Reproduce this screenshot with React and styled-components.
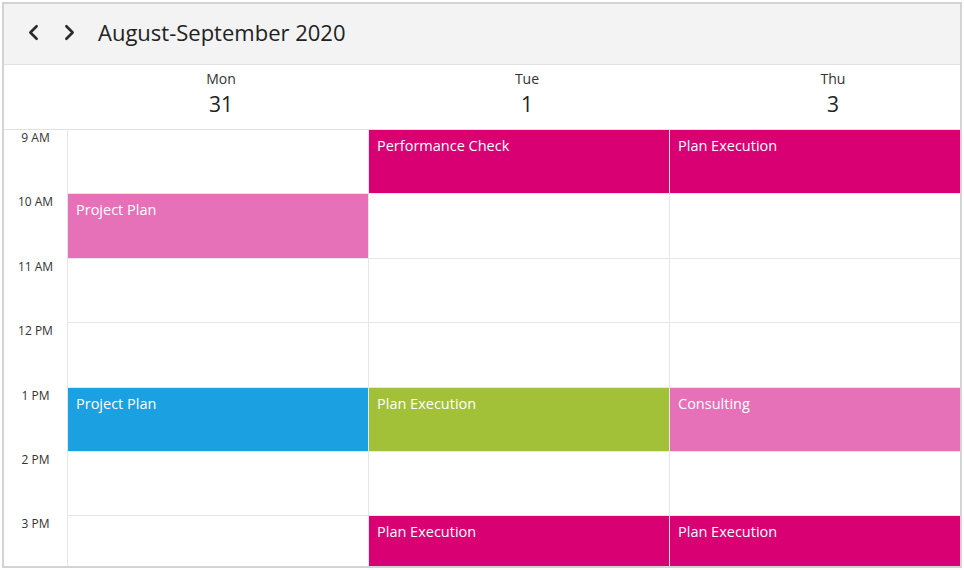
import React from "react";
import styled, { createGlobalStyle } from "styled-components";
import { ChevronLeft, ChevronRight } from "lucide-react";

const GlobalStyle = createGlobalStyle`
  html, body {
    margin: 0;
    padding: 0;
    background: #ffffff;
  }
  body {
    font-family: "Open Sans", "Noto Sans", Arial, sans-serif;
    color: #222222;
  }
`;

const Frame = styled.div`
  margin: 2px;
  width: 960px;
  height: 566px;
  box-sizing: border-box;
  border: 2px solid #d3d3d3;
  overflow: hidden;
  display: flex;
  flex-direction: column;
  background: #ffffff;
`;

const Toolbar = styled.div`
  height: 61px;
  box-sizing: border-box;
  flex: none;
  display: flex;
  align-items: center;
  padding: 0 0 4px 11px;
  background: #f3f3f3;
  border-bottom: 1px solid #e2e2e2;
`;

const NavButton = styled.button`
  width: 36px;
  height: 36px;
  padding: 0;
  border: none;
  background: transparent;
  color: #2b2b2b;
  display: flex;
  align-items: center;
  justify-content: center;
  cursor: pointer;
`;

const Title = styled.h1`
  margin: 0 0 0 11px;
  font-size: 22px;
  font-weight: 400;
  color: #222222;
  letter-spacing: 0;
`;

const DayHeader = styled.div`
  height: 65px;
  box-sizing: border-box;
  flex: none;
  display: grid;
  grid-template-columns: 64px repeat(3, 306px);
  border-bottom: 1px solid #e2e2e2;
`;

const DayCell = styled.div`
  display: flex;
  flex-direction: column;
  align-items: center;
  padding-top: 4px;
`;

const DayName = styled.span`
  font-size: 14px;
  line-height: 20px;
  color: #333333;
`;

const DayNumber = styled.span`
  font-size: 21px;
  line-height: 30px;
  color: #222222;
`;

const Body = styled.div`
  display: grid;
  grid-template-columns: 64px repeat(3, 301px);
  grid-auto-rows: 64.4px;
`;

const TimeLabel = styled.div`
  grid-column: 1;
  border-right: 1px solid #e6e6e6;
  text-align: center;
  font-size: 12px;
  line-height: 16px;
  color: #333333;
  padding-top: 0;
`;

const Slot = styled.div`
  box-sizing: border-box;
  border-right: 1px solid #e6e6e6;
  border-bottom: 1px solid #e6e6e6;
  position: relative;
`;

const Event = styled.div`
  position: absolute;
  inset: 0;
  background: ${(p) => p.$color};
  color: #ffffff;
  font-size: 14.5px;
  line-height: 20px;
  padding: 6px 8px;
`;

const COLORS = {
  magenta: "#d80073",
  pink: "#e671b8",
  blue: "#1ba1e2",
  green: "#a2c139",
};

const days = [
  { name: "Mon", num: 31 },
  { name: "Tue", num: 1 },
  { name: "Thu", num: 3 },
];

const hours = ["9 AM", "10 AM", "11 AM", "12 PM", "1 PM", "2 PM", "3 PM"];

// key: hourIndex-dayIndex
const events = {
  "0-1": { title: "Performance Check", color: COLORS.magenta },
  "0-2": { title: "Plan Execution", color: COLORS.magenta },
  "1-0": { title: "Project Plan", color: COLORS.pink },
  "4-0": { title: "Project Plan", color: COLORS.blue },
  "4-1": { title: "Plan Execution", color: COLORS.green },
  "4-2": { title: "Consulting", color: COLORS.pink },
  "6-1": { title: "Plan Execution", color: COLORS.magenta },
  "6-2": { title: "Plan Execution", color: COLORS.magenta },
};

export default function App() {
  return (
    <>
      <GlobalStyle />
      <Frame>
        <Toolbar>
          <NavButton aria-label="Previous">
            <ChevronLeft size={25} strokeWidth={2.5} />
          </NavButton>
          <NavButton aria-label="Next">
            <ChevronRight size={25} strokeWidth={2.5} />
          </NavButton>
          <Title>August-September 2020</Title>
        </Toolbar>
        <DayHeader>
          <div />
          {days.map((d) => (
            <DayCell key={d.name}>
              <DayName>{d.name}</DayName>
              <DayNumber>{d.num}</DayNumber>
            </DayCell>
          ))}
        </DayHeader>
        <Body>
          {hours.map((h, hi) => (
            <React.Fragment key={h}>
              <TimeLabel>{h}</TimeLabel>
              {days.map((d, di) => {
                const ev = events[`${hi}-${di}`];
                return (
                  <Slot key={d.name}>
                    {ev && <Event $color={ev.color}>{ev.title}</Event>}
                  </Slot>
                );
              })}
            </React.Fragment>
          ))}
        </Body>
      </Frame>
    </>
  );
}
